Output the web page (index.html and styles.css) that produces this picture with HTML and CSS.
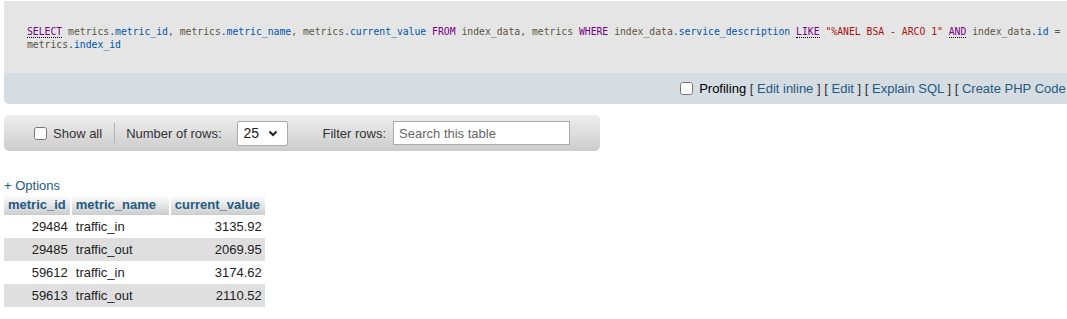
FILE: index.html
```html
<!DOCTYPE html>
<html lang="en">
<head>
<meta charset="utf-8">
<title>SQL result</title>
<link rel="stylesheet" href="styles.css">
</head>
<body>
<div class="page">
  <div class="sql-box">
    <div class="sql-query"><code><span class="kw ul">SELECT</span> <span class="id">metrics</span><span class="fld">.metric_id</span>, <span class="id">metrics</span><span class="fld">.metric_name</span>, <span class="id">metrics</span><span class="fld">.current_value</span> <span class="kw">FROM</span> <span class="id">index_data</span>, <span class="id">metrics</span> <span class="kw">WHERE</span> <span class="id">index_data</span><span class="fld">.service_description</span> <span class="kw ul">LIKE</span> <span class="str">"%ANEL BSA - ARCO 1"</span> <span class="kw ul">AND</span> <span class="id">index_data</span><span class="fld">.id</span> <span class="op">=</span> <span class="id">metrics</span><span class="fld">.index_id</span></code></div>
    <div class="sql-tools"><label class="check-label"><input type="checkbox" class="check tool-check">Profiling</label> <span class="br">[</span> <a class="link" href="#">Edit inline</a> <span class="br">]</span> <span class="br">[</span> <a class="link" href="#">Edit</a> <span class="br">]</span> <span class="br">[</span> <a class="link" href="#">Explain SQL</a> <span class="br">]</span> <span class="br">[</span> <a class="link" href="#">Create PHP Code</a> <span class="br">]</span></div>
  </div>

  <div class="navbar">
    <label class="show-all"><input type="checkbox" class="check"> <span>Show all</span></label>
    <span class="sep"></span>
    <span class="nav-label">Number of rows:</span>
    <span class="select">
      <span class="select-value">25</span>
      <svg class="chev" width="10" height="7" viewBox="0 0 10 7"><path d="M1.5 1.5l3.5 3.5 3.5-3.5" fill="none" stroke="#222" stroke-width="2"/></svg>
    </span>
    <span class="nav-label filter-label">Filter rows:</span>
    <input type="text" class="search" placeholder="Search this table">
  </div>

  <div class="options"><a class="link" href="#">+ Options</a></div>

  <table class="results">
    <thead>
      <tr>
        <th class="c1"><a href="#">metric_id</a></th>
        <th class="c2"><a href="#">metric_name</a></th>
        <th class="c3"><a href="#">current_value</a></th>
      </tr>
    </thead>
    <tbody>
      <tr><td class="num">29484</td><td>traffic_in</td><td class="num last">3135.92</td></tr>
      <tr><td class="num">29485</td><td>traffic_out</td><td class="num last">2069.95</td></tr>
      <tr><td class="num">59612</td><td>traffic_in</td><td class="num last">3174.62</td></tr>
      <tr><td class="num">59613</td><td>traffic_out</td><td class="num last">2110.52</td></tr>
    </tbody>
  </table>
</div>
</body>
</html>
```

FILE: styles.css
```css
html, body {
  margin: 0;
  padding: 0;
  overflow: hidden;
  background: #fff;
}

body {
  font-family: "Liberation Sans", Arial, sans-serif;
  font-size: 13px;
  color: #333;
}

.page {
  padding: 1px 0 0 4px;
}

.sql-box {
  width: 1080px;
  border-bottom-left-radius: 5px;
  overflow: hidden;
}

.sql-query {
  background: #e5e5e5;
  padding: 24px 5px 22px 23px;
  font-family: "DejaVu Sans Mono", "Liberation Mono", monospace;
  font-size: 9.75px;
  line-height: 13px;
  color: #5c5344;
}

.sql-query code {
  font-family: inherit;
}

.kw { color: #770088; }
.ul { border-bottom: 1px dotted #000; }
.id { color: #5c5344; }
.fld { color: #0055aa; }
.str { color: #aa1111; }
.op { color: #555; }

.sql-tools {
  background: #d5dce2;
  height: 31px;
  line-height: 31px;
  text-align: right;
  padding-right: 11px;
  white-space: nowrap;
  color: #222;
}

.check-label {
  color: #000;
}

.check {
  margin: 0;
  width: 13px;
  height: 13px;
}

.tool-check {
  vertical-align: -2px;
  margin-right: 6px;
}

.br { color: #333; }

.link {
  color: #235a81;
  text-decoration: none;
}

.navbar {
  margin-top: 11px;
  width: 596px;
  height: 36px;
  box-sizing: border-box;
  border-radius: 5px;
  background: linear-gradient(#eee, #ccc);
  display: flex;
  align-items: center;
  padding-left: 30px;
  color: #333;
}

.show-all {
  display: flex;
  align-items: center;
  gap: 6px;
}

.sep {
  width: 1px;
  height: 20px;
  background: #a9b8c8;
  margin: 0 11px 0 12px;
}

.select {
  margin-left: 15px;
  width: 51px;
  height: 25px;
  box-sizing: border-box;
  border: 1px solid #aaa;
  border-radius: 2px;
  background: #fff;
  display: flex;
  align-items: center;
  justify-content: space-between;
  padding: 0 9px 0 6px;
  color: #222;
  font-size: 14px;
}

.chev {
  display: block;
}

.filter-label {
  margin-left: 35px;
}

.search {
  margin: 0 0 0 7px;
  width: 177px;
  height: 24px;
  box-sizing: border-box;
  border: 1px solid #aaa;
  border-radius: 0;
  padding: 0 5px;
  font-family: "Liberation Sans", Arial, sans-serif;
  font-size: 13px;
  color: #333;
  background: #fff;
  outline: none;
}

.search::placeholder {
  color: #666;
}

.options {
  margin-top: 27px;
  line-height: 16px;
}

.results {
  margin-top: 1px;
  border-collapse: separate;
  border-spacing: 0;
  color: #222;
}

.results th {
  background: linear-gradient(#fff, #ccc);
  padding: 2px 4px;
  line-height: 16px;
  text-align: left;
  font-weight: bold;
}

.results th a {
  color: #235a81;
  text-decoration: none;
}

.results th.c1 { width: 57px; border-right: 2px solid #fff; }
.results th.c2 { width: 89px; border-right: 2px solid #fff; }
.results th.c3 { width: 86px; }

.results td {
  padding: 3px 4px;
  line-height: 17px;
}

.results td.num {
  text-align: right;
}

.results td.last {
  padding-right: 3px;
}

.results tbody tr:nth-child(even) td {
  background: #dfdfdf;
}
```
